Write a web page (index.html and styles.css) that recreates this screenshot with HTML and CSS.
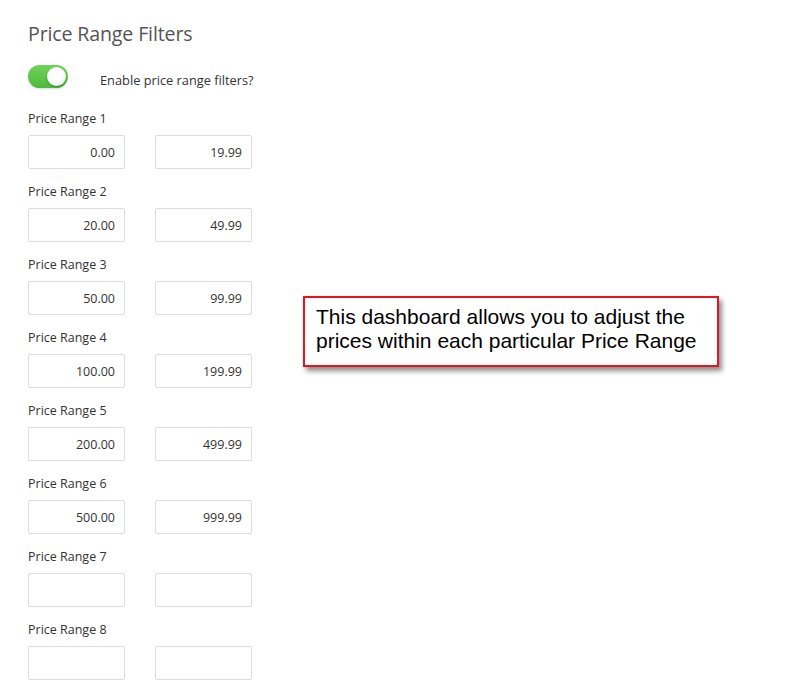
FILE: index.html
```html
<!DOCTYPE html>
<html>
<head>
<meta charset="utf-8">
<link rel="stylesheet" href="styles.css">
</head>
<body>
<div class="page">
  <div class="form">
    <h1 class="title">Price Range Filters</h1>
    <div class="toggle-row">
      <span class="toggle"><span class="knob"></span></span>
      <span class="toggle-label">Enable price range filters?</span>
    </div>
    <div class="group">
      <div class="label">Price Range 1</div>
      <div class="inputs"><input class="field" value="0.00"><input class="field" value="19.99"></div>
    </div>
    <div class="group">
      <div class="label">Price Range 2</div>
      <div class="inputs"><input class="field" value="20.00"><input class="field" value="49.99"></div>
    </div>
    <div class="group">
      <div class="label">Price Range 3</div>
      <div class="inputs"><input class="field" value="50.00"><input class="field" value="99.99"></div>
    </div>
    <div class="group">
      <div class="label">Price Range 4</div>
      <div class="inputs"><input class="field" value="100.00"><input class="field" value="199.99"></div>
    </div>
    <div class="group">
      <div class="label">Price Range 5</div>
      <div class="inputs"><input class="field" value="200.00"><input class="field" value="499.99"></div>
    </div>
    <div class="group">
      <div class="label">Price Range 6</div>
      <div class="inputs"><input class="field" value="500.00"><input class="field" value="999.99"></div>
    </div>
    <div class="group">
      <div class="label">Price Range 7</div>
      <div class="inputs"><input class="field" value=""><input class="field" value=""></div>
    </div>
    <div class="group">
      <div class="label">Price Range 8</div>
      <div class="inputs"><input class="field" value=""><input class="field" value=""></div>
    </div>
  </div>
  <div class="callout">This dashboard allows you to adjust the prices within each particular Price Range</div>
</div>
</body>
</html>
```
FILE: styles.css
```css
html, body {
  margin: 0;
  padding: 0;
  background: #fff;
}
body {
  font-family: "Open Sans", "Noto Sans", sans-serif;
  color: #333;
  overflow: hidden;
}
.page {
  display: flex;
  padding: 20px 0 0 28px;
  height: 687px;
  box-sizing: border-box;
}
.form {
  width: 275px;
  flex: none;
}
.title {
  margin: 0;
  font-size: 19.6px;
  font-weight: 400;
  color: #555;
  line-height: 28px;
  letter-spacing: -0.15px;
}
.toggle-row {
  display: flex;
  align-items: center;
  margin-top: 17px;
  height: 23px;
}
.toggle {
  position: relative;
  width: 40px;
  height: 23px;
  border-radius: 12px;
  background: linear-gradient(#6fd35a, #4fb83a);
  box-shadow: 0 1px 2px rgba(0,0,0,0.15);
  flex: none;
}
.knob {
  position: absolute;
  right: 2px;
  top: 2px;
  width: 19px;
  height: 19px;
  border-radius: 50%;
  background: radial-gradient(circle at 40% 35%, #ffffff 40%, #e4e4e4 100%);
  box-shadow: 0 1px 2px rgba(0,0,0,0.3);
}
.toggle-label {
  margin-left: 32px;
  padding-top: 6px;
  font-size: 12.8px;
  color: #333;
}
.toggle-row + .group {
  margin-top: 22px;
}
.group + .group {
  margin-top: 14px;
}
.label {
  font-size: 12.5px;
  line-height: 18px;
  color: #333;
}
.inputs {
  display: flex;
  gap: 30px;
  margin-top: 7px;
}
.field {
  width: 97px;
  height: 34px;
  box-sizing: border-box;
  border: 1px solid #dcdcdc;
  border-radius: 2px;
  padding: 0 9px;
  text-align: right;
  font-family: "Open Sans", "Noto Sans", sans-serif;
  font-size: 12.5px;
  color: #333;
  background: #fff;
  outline: none;
}
.callout {
  align-self: flex-start;
  margin-top: 276px;
  width: 416px;
  height: 71px;
  box-sizing: border-box;
  border: 2px solid #e8141b;
  padding: 7px 11px;
  font-family: "Liberation Sans", Arial, sans-serif;
  font-size: 21px;
  line-height: 24px;
  color: #000;
  background: #fff;
  box-shadow: 3px 4px 5px rgba(0,0,0,0.45);
}
```
